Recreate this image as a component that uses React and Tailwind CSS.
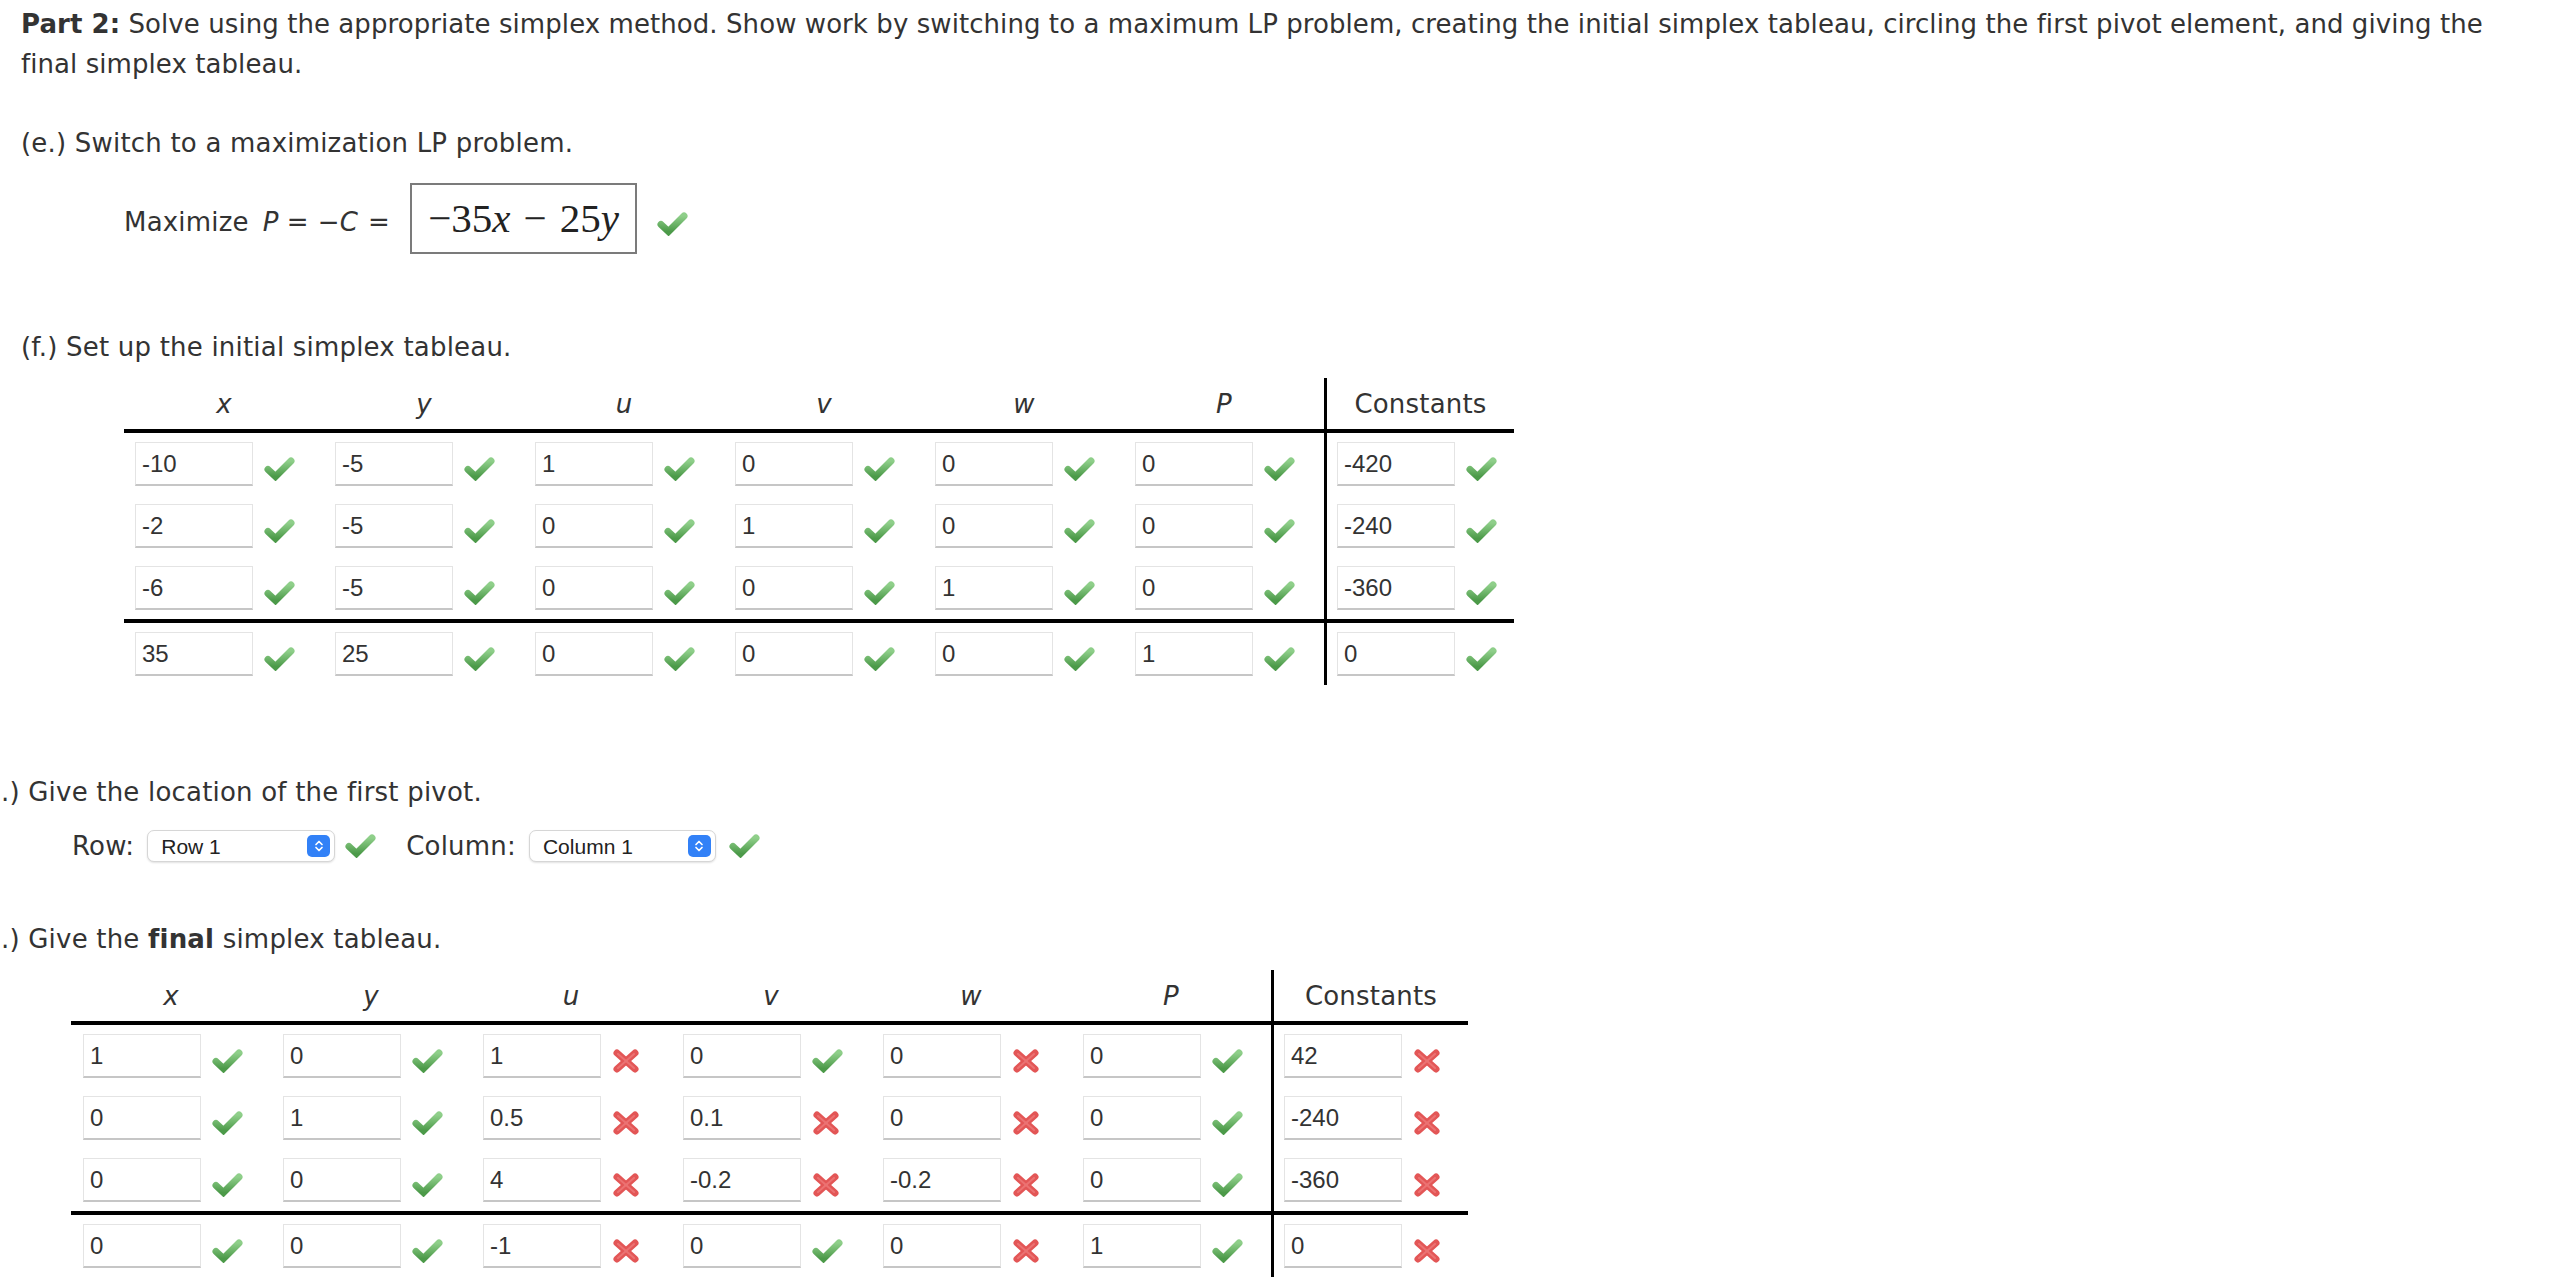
import React from "react";

// initial tableau: [value, correct]
const firstTableau = [
  [["-10", 1], ["-5", 1], ["1", 1], ["0", 1], ["0", 1], ["0", 1], ["-420", 1]],
  [["-2", 1], ["-5", 1], ["0", 1], ["1", 1], ["0", 1], ["0", 1], ["-240", 1]],
  [["-6", 1], ["-5", 1], ["0", 1], ["0", 1], ["1", 1], ["0", 1], ["-360", 1]],
  [["35", 1], ["25", 1], ["0", 1], ["0", 1], ["0", 1], ["1", 1], ["0", 1]],
];

const finalTableau = [
  [["1", 1], ["0", 1], ["1", 0], ["0", 1], ["0", 0], ["0", 1], ["42", 0]],
  [["0", 1], ["1", 1], ["0.5", 0], ["0.1", 0], ["0", 0], ["0", 1], ["-240", 0]],
  [["0", 1], ["0", 1], ["4", 0], ["-0.2", 0], ["-0.2", 0], ["0", 1], ["-360", 0]],
  [["0", 1], ["0", 1], ["-1", 0], ["0", 1], ["0", 0], ["1", 1], ["0", 0]],
];

const headers = ["x", "y", "u", "v", "w", "P"];

const Check = () => (
  <svg width="31" height="24" viewBox="0 0 31 24" className="mt-[10px] shrink-0">
    <defs>
      <linearGradient id="chk" x1="0" y1="0" x2="0" y2="1">
        <stop offset="0" stopColor="#8fcf8a" />
        <stop offset="1" stopColor="#4c9a49" />
      </linearGradient>
    </defs>
    <polyline
      points="4,12.5 11.5,19.5 27,4"
      fill="none"
      stroke="url(#chk)"
      strokeWidth="7"
      strokeLinecap="round"
      strokeLinejoin="miter"
    />
  </svg>
);

const Cross = () => (
  <svg width="28" height="26" viewBox="0 0 28 26" className="mt-[10px] shrink-0">
    <g stroke="#e35656" strokeWidth="7" strokeLinecap="round">
      <line x1="5" y1="5" x2="23" y2="21" />
      <line x1="23" y1="5" x2="5" y2="21" />
    </g>
    <g stroke="#ef7f7f" strokeWidth="2" strokeLinecap="round" opacity="0.7">
      <line x1="6" y1="6" x2="22" y2="20" />
      <line x1="22" y1="6" x2="6" y2="20" />
    </g>
  </svg>
);

function Cell({ value, ok }) {
  return (
    <div className="flex items-center gap-[11px]">
      <div className="w-[118px] h-[44px] bg-white border border-[#e4e4e4] border-b-2 border-b-[#c6c6c6] pl-[6px] flex items-center text-[24px] leading-none tracking-normal font-['Liberation_Sans',Arial,sans-serif] text-[#333]">
        {value}
      </div>
      {ok ? <Check /> : <Cross />}
    </div>
  );
}

function Tableau({ rows, padClass, constClass }) {
  const renderRow = (row, i) => (
    <div key={i} className="flex h-[62px]">
      {row.slice(0, 6).map(([v, ok], j) => (
        <div key={j} className={`w-[200px] flex items-center ${padClass}`}>
          <Cell value={v} ok={ok} />
        </div>
      ))}
      <div className={`${constClass} border-l-[3px] border-black flex items-center pl-[10px]`}>
        <Cell value={row[6][0]} ok={row[6][1]} />
      </div>
    </div>
  );

  return (
    <div className="flex flex-col w-fit">
      <div className="flex h-[51px]">
        {headers.map((h) => (
          <div key={h} className="w-[200px] flex items-center justify-center italic">
            {h}
          </div>
        ))}
        <div className={`${constClass} border-l-[3px] border-black flex items-center justify-center`}>
          Constants
        </div>
      </div>
      <div className="h-[4px] bg-black" />
      {rows.slice(0, 3).map(renderRow)}
      <div className="h-[4px] bg-black" />
      {renderRow(rows[3], 3)}
    </div>
  );
}

function Select({ text, w }) {
  return (
    <div className={`${w} h-[32px] bg-white border border-[#d6d6d6] rounded-[7px] shadow-[0_1px_2px_rgba(0,0,0,0.12)] flex items-center justify-between pl-[13px] pr-[4px]`}>
      <span className="text-[21px] leading-none tracking-normal font-['Liberation_Sans',Arial,sans-serif] text-[#222]">{text}</span>
      <span className="w-[23px] h-[22px] rounded-[5px] bg-[#3281f7] flex items-center justify-center">
        <svg width="12" height="16" viewBox="0 0 12 16">
          <polyline points="3,6.5 6,3.5 9,6.5" fill="none" stroke="white" strokeWidth="1.7" strokeLinecap="round" strokeLinejoin="round" />
          <polyline points="3,9.5 6,12.5 9,9.5" fill="none" stroke="white" strokeWidth="1.7" strokeLinecap="round" strokeLinejoin="round" />
        </svg>
      </span>
    </div>
  );
}

export default function App() {
  return (
    <div className="w-[2572px] min-h-[1286px] bg-white text-[#333] font-['DejaVu_Sans',Verdana,sans-serif] text-[26px] tracking-[0.2px] leading-[40px] overflow-hidden">
      {/* Part 2 intro */}
      <p className="pl-[21px] pt-[4px] whitespace-nowrap tracking-[0.07px]">
        <b>Part 2:</b> Solve using the appropriate simplex method. Show work by switching to a maximum LP problem, creating the initial simplex tableau, circling the first pivot element, and giving the
        <br />
        final simplex tableau.
      </p>

      {/* (e.) */}
      <p className="pl-[21px] mt-[39px]">(e.) Switch to a maximization LP problem.</p>
      <div className="mt-[20px] pl-[124px] flex items-center h-[71px]">
        <div className="flex items-center mt-[6px]">
          <span>Maximize</span>
          <span className="ml-[14px] italic">P</span>
          <span className="ml-[8px]">=</span>
          <span className="ml-[9px]">−<span className="italic">C</span></span>
          <span className="ml-[10px]">=</span>
        </div>
        <div className="ml-[20px] w-[227px] h-[71px] border-2 border-[#7b7b7b] flex items-center justify-center font-['Liberation_Serif','Times_New_Roman',serif] text-[41px] tracking-normal leading-none text-[#222]">
          <span>−35</span>
          <span className="italic">x</span>
          <span className="mx-[13px]">−</span>
          <span>25</span>
          <span className="italic">y</span>
        </div>
        <div className="ml-[20px]">
          <Check />
        </div>
      </div>

      {/* (f.) */}
      <p className="pl-[21px] mt-[73px]">(f.) Set up the initial simplex tableau.</p>
      <div className="mt-[11px] ml-[124px]">
        <Tableau rows={firstTableau} padClass="pl-[11px]" constClass="w-[190px]" />
      </div>

      {/* (g.) */}
      <p className="mt-[87px] pl-[1px]">.) Give the location of the first pivot.</p>
      <div className="mt-[18px] pl-[72px] flex items-center h-[32px]">
        <span>Row:</span>
        <div className="ml-[13px]">
          <Select text="Row 1" w="w-[188px]" />
        </div>
        <div className="ml-[10px] -mt-[10px]">
          <Check />
        </div>
        <span className="ml-[30px]">Column:</span>
        <div className="ml-[13px]">
          <Select text="Column 1" w="w-[187px]" />
        </div>
        <div className="ml-[13px] -mt-[10px]">
          <Check />
        </div>
      </div>

      {/* (h.) */}
      <p className="mt-[57px] pl-[1px]">
        .) Give the <b>final</b> simplex tableau.
      </p>
      <div className="mt-[11px] ml-[71px]">
        <Tableau rows={finalTableau} padClass="pl-[12px]" constClass="w-[197px]" />
      </div>
    </div>
  );
}
